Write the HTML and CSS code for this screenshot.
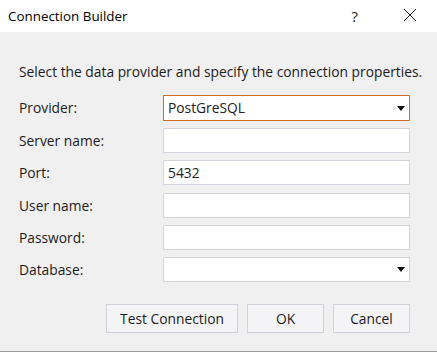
FILE: index.html
```html
<!DOCTYPE html>
<html lang="en">
<head>
<meta charset="utf-8">
<title>Connection Builder</title>
<link rel="stylesheet" href="styles.css">
</head>
<body>
<div class="window">
  <header class="titlebar">
    <span class="title">Connection Builder</span>
    <div class="controls">
      <span class="help">?</span>
      <svg class="close" width="14" height="14" viewBox="0 0 14 14" aria-hidden="true">
        <path d="M1 1 L13 13 M13 1 L1 13" stroke="#1a1a1a" stroke-width="1" fill="none"/>
      </svg>
    </div>
  </header>
  <main class="content">
    <p class="intro">Select the data provider and specify the connection properties.</p>
    <div class="form">
      <label class="label">Provider:</label>
      <div class="field select active"><span class="value">PostGreSQL</span><span class="arrow"></span></div>
      <label class="label">Server name:</label>
      <div class="field"></div>
      <label class="label">Port:</label>
      <div class="field"><span class="value">5432</span></div>
      <label class="label">User name:</label>
      <div class="field"></div>
      <label class="label">Password:</label>
      <div class="field"></div>
      <label class="label">Database:</label>
      <div class="field select"><span class="value"></span><span class="arrow"></span></div>
    </div>
    <div class="buttons">
      <button class="btn btn-test">Test Connection</button>
      <button class="btn btn-ok">OK</button>
      <button class="btn btn-cancel">Cancel</button>
    </div>
  </main>
</div>
</body>
</html>
```
FILE: styles.css
```css
html, body {
  margin: 0;
  padding: 0;
}
body {
  width: 437px;
  height: 352px;
  overflow: hidden;
  font-family: "Open Sans", "Noto Sans", sans-serif;
  color: #1b1b1b;
  background: #f0f0f0;
}
.window {
  height: 351px;
  border-bottom: 1px solid #9a9a9a;
  background: #f0f0f0;
  display: flex;
  flex-direction: column;
}
.titlebar {
  height: 32px;
  background: #ffffff;
  display: flex;
  align-items: center;
  justify-content: space-between;
  padding-left: 8px;
  box-sizing: border-box;
}
.title {
  font-size: 13.4px;
  line-height: 18px;
  margin-top: -1px;
  color: #000;
}
.controls {
  display: flex;
  align-items: center;
  height: 100%;
}
.help {
  font-size: 15px;
  line-height: 18px;
  color: #222;
  margin-right: 45px;
  margin-top: -1px;
}
.close {
  display: block;
  margin-right: 20px;
  margin-top: -2px;
}
.content {
  padding: 30px 27px 0 19px;
}
.intro {
  margin: 0 0 13px;
  font-size: 13.8px;
  line-height: 20px;
  white-space: nowrap;
}
.form {
  display: grid;
  grid-template-columns: 144px 247px;
  grid-template-rows: 26px 25px 26px 25px 25px 25px;
  row-gap: 7px;
}
.label {
  font-size: 13.8px;
  line-height: 25px;
}
.field {
  box-sizing: border-box;
  height: 25px;
  background: #fff;
  border: 1px solid #d3d3de;
  display: flex;
  align-items: center;
  padding: 0 4px;
}
.field.active {
  height: 26px;
  border-color: #cf6a26;
}
.value {
  flex: 1;
  font-size: 13.8px;
  line-height: 18px;
  color: #222;
}
.arrow {
  width: 0;
  height: 0;
  border-left: 4.5px solid transparent;
  border-right: 4.5px solid transparent;
  border-top: 5px solid #111;
}
.buttons {
  display: flex;
  justify-content: flex-end;
  gap: 9px;
  margin-top: 22px;
}
.btn {
  box-sizing: border-box;
  height: 29px;
  font-family: "Open Sans", "Noto Sans", sans-serif;
  font-size: 13.8px;
  color: #1b1b1b;
  background: #f4f4f7;
  border: 1px solid #d0d0da;
  padding: 0;
}
.btn-test { width: 132px; }
.btn-ok { width: 77px; }
.btn-cancel { width: 77px; }
```
